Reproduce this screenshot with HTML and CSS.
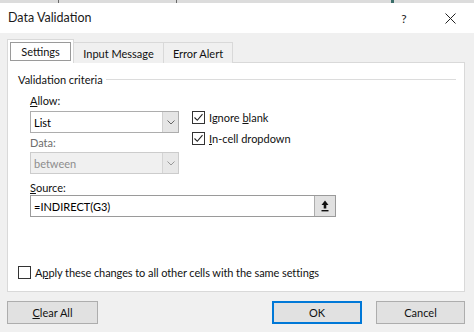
FILE: index.html
```html
<!DOCTYPE html>
<html>
<head>
<meta charset="utf-8">
<link rel="stylesheet" href="styles.css">
</head>
<body>
<div class="screen">
  <div class="grid-strip">
    <span class="cell c1"></span>
    <span class="cell c2"></span>
    <span class="cell c3"><span class="marker"></span></span>
  </div>
  <div class="titlebar">
    <span class="title">Data Validation</span>
    <span class="help">?</span>
    <span class="close">
      <svg width="11" height="11" viewBox="0 0 11 11"><path d="M0.5 0.5 L10.5 10.5 M10.5 0.5 L0.5 10.5" stroke="#222" stroke-width="1" fill="none"/></svg>
    </span>
  </div>
  <div class="dialog">
    <div class="tabs">
      <div class="tab active"><span class="focus">Settings</span></div>
      <div class="tab t-input">Input Message</div>
      <div class="tab t-error">Error Alert</div>
    </div>
    <div class="panel">
      <div class="group-head">
        <span class="group-label">Validation criteria</span>
        <span class="group-line"></span>
      </div>
      <div class="criteria">
        <div class="criteria-row">
          <div class="left-col">
            <div class="label lbl-allow"><u>A</u>llow:</div>
            <div class="combo">
              <span class="combo-text">List</span>
              <span class="combo-btn"><svg width="8" height="5" viewBox="0 0 8 5"><path d="M0.5 0.5 L4 4 L7.5 0.5" stroke="#666" stroke-width="1" fill="none"/></svg></span>
            </div>
            <div class="label disabled lbl-data">Data:</div>
            <div class="combo combo-disabled">
              <span class="combo-text">between</span>
              <span class="combo-btn"><svg width="8" height="5" viewBox="0 0 8 5"><path d="M0.5 0.5 L4 4 L7.5 0.5" stroke="#999" stroke-width="1" fill="none"/></svg></span>
            </div>
          </div>
          <div class="right-col">
            <div class="check-row">
              <span class="checkbox"><svg width="11" height="11" viewBox="0 0 11 11"><path d="M1.5 5.5 L4.3 8.3 L9.5 2.2" stroke="#222" stroke-width="1.1" fill="none"/></svg></span>
              <span class="check-label">Ignore <u>b</u>lank</span>
            </div>
            <div class="check-row">
              <span class="checkbox"><svg width="11" height="11" viewBox="0 0 11 11"><path d="M1.5 5.5 L4.3 8.3 L9.5 2.2" stroke="#222" stroke-width="1.1" fill="none"/></svg></span>
              <span class="check-label"><u>I</u>n-cell dropdown</span>
            </div>
          </div>
        </div>
        <div class="label lbl-source"><u>S</u>ource:</div>
        <div class="source">
          <span class="source-text">=INDIRECT(G3)</span>
          <span class="source-btn"><svg width="8" height="12" viewBox="0 0 8 12"><path d="M4 0.5 L7.5 5 L5.3 5 L5.3 8.5 L2.7 8.5 L2.7 5 L0.5 5 Z" fill="#111"/><rect x="0.5" y="10" width="7" height="1.4" fill="#111"/></svg></span>
        </div>
      </div>
      <div class="apply-row">
        <span class="checkbox"></span>
        <span class="check-label apply-label">A<u>p</u>ply these changes to all other cells with the same settings</span>
      </div>
    </div>
    <div class="buttons">
      <div class="btn btn-clear"><u>C</u>lear All</div>
      <div class="spacer"></div>
      <div class="btn btn-ok">OK</div>
      <div class="btn btn-cancel">Cancel</div>
    </div>
  </div>
</div>
</body>
</html>
```
FILE: styles.css
```css
* { box-sizing: border-box; }
html, body { margin: 0; padding: 0; }
body {
  width: 474px;
  height: 332px;
  overflow: hidden;
  font-family: "Lato", "Noto Sans", sans-serif;
  font-size: 11px;
  color: #000;
  background: #f0f0f0;
}
u { text-decoration: underline; text-underline-offset: 1px; }
.screen { width: 474px; height: 332px; display: flex; flex-direction: column; }

.grid-strip {
  height: 3px;
  display: flex;
  background: #dcdcdc;
}
.cell { height: 3px; border-right: 1px solid #6a6a6a; }
.c1 { width: 59px; }
.c2 { width: 118px; }
.c3 { flex: 1; border-right: none; position: relative; }
.marker {
  position: absolute;
  left: 214px;
  top: 0;
  width: 3px;
  height: 3px;
  background: #3b6e6a;
}

.titlebar {
  height: 30px;
  background: #fff;
  display: flex;
  align-items: center;
  padding-left: 8px;
}
.title {
  font-size: 12.5px;
  color: #1a1a1a;
  flex: 1;
  padding-bottom: 1px;
}
.help {
  font-size: 12px;
  width: 12px;
  text-align: center;
  margin-right: 35px;
  color: #222;
}
.close { width: 11px; height: 11px; margin-right: 18px; display: flex; }

.dialog {
  flex: 1;
  display: flex;
  flex-direction: column;
  padding: 7px 9px 0 7px;
}
.tabs {
  display: flex;
  align-items: flex-end;
  height: 23px;
  position: relative;
  z-index: 1;
  margin-bottom: -1px;
}
.tab {
  height: 21px;
  display: flex;
  align-items: center;
  justify-content: center;
  background: #f0f0f0;
  border: 1px solid #d9d9d9;
  border-bottom: none;
  margin-left: -1px;
  color: #111;
}
.tab.active {
  height: 24px;
  width: 67px;
  background: #fff;
  margin-left: 0;
  border-color: #d9d9d9;
  padding-bottom: 1px;
}
.focus {
  width: 61px;
  height: 19px;
  border: 1px solid #9a9a9a;
  display: flex;
  align-items: center;
  justify-content: center;
  margin-top: 1px;
}
.t-input { width: 91px; }
.t-error { width: 70px; }

.panel {
  height: 230px;
  background: #fff;
  border: 1px solid #d9d9d9;
  display: flex;
  flex-direction: column;
}
.group-head {
  display: flex;
  align-items: center;
  height: 14px;
  margin-top: 9px;
  padding-left: 10px;
  padding-right: 8px;
}
.group-label { color: #111; }
.group-line { flex: 1; height: 1px; background: #dcdcdc; margin-left: 3px; margin-top: 1px; }

.criteria { padding-left: 22px; display: flex; flex-direction: column; }
.criteria-row { display: flex; gap: 13px; }
.left-col { width: 149px; display: flex; flex-direction: column; }
.label { height: 14px; line-height: 14px; color: #111; }
.lbl-allow { margin-top: 8px; }
.lbl-data { margin-top: 3px; }
.lbl-source { margin-top: 7px; }
.disabled { color: #6d6d6d; }

.combo {
  height: 22px;
  margin-top: 3px;
  border: 1px solid #adadad;
  background: #fff;
  display: flex;
}
.combo-text { flex: 1; display: flex; align-items: center; padding-left: 3px; }
.combo-btn {
  width: 16px;
  background: #e5e5e5;
  border-left: 1px solid #cfcfcf;
  display: flex;
  align-items: center;
  justify-content: center;
}
.combo-disabled { background: #f0f0f0; border-color: #cccccc; margin-top: 2px; color: #8d8d8d; }
.combo-disabled .combo-btn { background: #e8e8e8; border-left-color: #d4d4d4; }

.right-col { display: flex; flex-direction: column; padding-top: 21px; }
.check-row { display: flex; align-items: center; height: 21px; }
.checkbox {
  width: 13px;
  height: 13px;
  border: 1px solid #333;
  background: #fff;
  display: flex;
  align-items: center;
  justify-content: center;
  margin-right: 4px;
}
.check-label { color: #111; }
.apply-label { letter-spacing: -0.08px; }

.source {
  width: 306px;
  height: 22px;
  margin-top: 0;
  border: 1px solid #9a9a9a;
  display: flex;
  background: #fff;
}
.source-text { flex: 1; display: flex; align-items: center; padding-left: 3px; }
.source-btn {
  width: 21px;
  background: #e1e1e1;
  border-left: 1px solid #adadad;
  display: flex;
  align-items: center;
  justify-content: center;
}

.apply-row {
  margin-top: auto;
  margin-bottom: 12px;
  padding-left: 10px;
  display: flex;
  align-items: center;
  height: 14px;
}

.buttons {
  display: flex;
  margin-top: 9px;
  gap: 14px;
}
.spacer { flex: 1; }
.btn {
  height: 23px;
  background: #e1e1e1;
  border: 1px solid #adadad;
  display: flex;
  align-items: center;
  justify-content: center;
  color: #111;
}
.btn-clear { width: 91px; }
.btn-ok { width: 90px; border: 2px solid #0078d7; }
.btn-cancel { width: 89px; margin-left: 0; }
```
